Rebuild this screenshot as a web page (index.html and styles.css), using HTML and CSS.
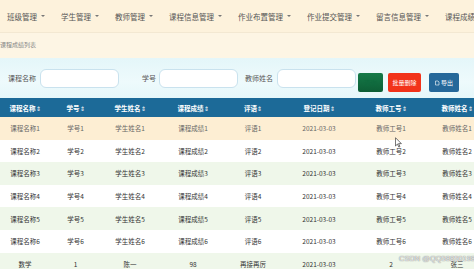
FILE: index.html
```html
<!DOCTYPE html>
<html lang="zh">
<head>
<meta charset="utf-8">
<title>课程成绩列表</title>
<link rel="stylesheet" href="styles.css">
</head>
<body>
<div class="page">
  <nav class="nav">
    <span class="nav-item">班级管理<i class="caret"></i></span>
    <span class="nav-item">学生管理<i class="caret"></i></span>
    <span class="nav-item">教师管理<i class="caret"></i></span>
    <span class="nav-item">课程信息管理<i class="caret"></i></span>
    <span class="nav-item">作业布置管理<i class="caret"></i></span>
    <span class="nav-item">作业提交管理<i class="caret"></i></span>
    <span class="nav-item">留言信息管理<i class="caret"></i></span>
    <span class="nav-item">课程成绩<i class="caret"></i></span>
  </nav>
  <div class="crumb">课程成绩列表</div>
  <div class="search">
    <label class="lbl lbl1">课程名称</label><span class="inp"></span>
    <label class="lbl lbl2">学号</label><span class="inp inp2"></span>
    <label class="lbl lbl3">教师姓名</label><span class="inp inp3"></span>
    <span class="btn btn-green">查询</span>
    <span class="btn btn-red">批量删除</span>
    <span class="btn btn-blue"><svg class="ico" viewBox="0 0 10 10" width="5" height="6"><path d="M1 1h5l2 2v6H1z" fill="none" stroke="#fff" stroke-width="1.2"/></svg>导出</span>
  </div>
  <table class="tbl">
    <colgroup><col class="c1"><col class="c2"><col class="c3"><col class="c4"><col class="c5"><col class="c6"><col class="c7"><col class="c8"></colgroup>
    <thead>
      <tr><th>课程名称<b>⇕</b></th><th>学号<b>⇕</b></th><th>学生姓名<b>⇕</b></th><th>课程成绩<b>⇕</b></th><th>评语<b>⇕</b></th><th>登记日期<b>⇕</b></th><th>教师工号<b>⇕</b></th><th>教师姓名<b>⇕</b></th></tr>
    </thead>
    <tbody>
      <tr class="hover"><td>课程名称1</td><td>学号1</td><td>学生姓名1</td><td>课程成绩1</td><td>评语1</td><td>2021-03-03</td><td>教师工号1</td><td>教师姓名1</td></tr>
      <tr><td>课程名称2</td><td>学号2</td><td>学生姓名2</td><td>课程成绩2</td><td>评语2</td><td>2021-03-03</td><td>教师工号2</td><td>教师姓名2</td></tr>
      <tr class="alt"><td>课程名称3</td><td>学号3</td><td>学生姓名3</td><td>课程成绩3</td><td>评语3</td><td>2021-03-03</td><td>教师工号3</td><td>教师姓名3</td></tr>
      <tr><td>课程名称4</td><td>学号4</td><td>学生姓名4</td><td>课程成绩4</td><td>评语4</td><td>2021-03-03</td><td>教师工号4</td><td>教师姓名4</td></tr>
      <tr class="alt"><td>课程名称5</td><td>学号5</td><td>学生姓名5</td><td>课程成绩5</td><td>评语5</td><td>2021-03-03</td><td>教师工号5</td><td>教师姓名5</td></tr>
      <tr><td>课程名称6</td><td>学号6</td><td>学生姓名6</td><td>课程成绩6</td><td>评语6</td><td>2021-03-03</td><td>教师工号6</td><td>教师姓名6</td></tr>
      <tr class="alt"><td>数学</td><td>1</td><td>陈一</td><td>98</td><td>再接再厉</td><td>2021-03-03</td><td>2</td><td>张三</td></tr>
    </tbody>
  </table>
  <svg class="cursor" viewBox="0 0 8 12" width="7" height="11"><path d="M0.5 0.5v9.5l2.3-2.2 1.6 3.4 1.3-.6-1.6-3.3h3.2z" fill="#fff" stroke="#333" stroke-width="0.8"/></svg>
  <div class="mark">CSDN @QQ58850198</div>
</div>
</body>
</html>
```
FILE: styles.css
```css
html, body {
  margin: 0;
  padding: 0;
}
body {
  width: 474px;
  height: 269px;
  overflow: hidden;
  background: #fdf5e4;
  font-family: "Noto Sans CJK SC", "Noto Sans", sans-serif;
}
.page {
  position: relative;
  width: 474px;
  height: 269px;
  overflow: hidden;
}
.nav {
  height: 32px;
  background: #fdf2dc;
  border-bottom: 1px solid #f3e8d2;
  display: flex;
  align-items: center;
  padding-left: 7px;
  white-space: nowrap;
}
.nav-item {
  font-size: 7.5px;
  color: #555;
  margin-right: 16px;
  display: flex;
  align-items: center;
  flex: none;
}
.caret {
  display: inline-block;
  width: 0;
  height: 0;
  border-left: 2px solid transparent;
  border-right: 2px solid transparent;
  border-top: 2.5px solid #777;
  margin-left: 4px;
}
.crumb {
  height: 25px;
  font-size: 6px;
  color: #888;
  line-height: 24px;
}
.search {
  height: 40px;
  background: linear-gradient(#e4f6f9, #eefafc 60%, #e6f7fa);
  display: flex;
  align-items: flex-start;
  padding-top: 11px;
  box-sizing: border-box;
}
.lbl {
  font-size: 7px;
  color: #555;
  line-height: 19px;
  flex: none;
}
.lbl1 { margin-left: 8px; margin-right: 4px; }
.lbl2 { margin-left: 23px; margin-right: 3px; }
.lbl3 { margin-left: 7px; margin-right: 4px; }
.inp {
  width: 77px;
  height: 17px;
  background: #fff;
  border: 1px solid #c9e2ee;
  border-radius: 6px;
  flex: none;
}
.btn {
  margin-top: 4px;
  height: 19px;
  border-radius: 2px;
  font-size: 6px;
  color: #fff;
  display: flex;
  align-items: center;
  justify-content: center;
  flex: none;
  box-sizing: border-box;
}
.btn-green {
  margin-left: 2px;
  width: 25px;
  background: linear-gradient(#157a48, #0d5e36);
  color: #0f6a3e;
}
.btn-red {
  margin-left: 5px;
  width: 33px;
  background: #f2331a;
}
.btn-blue {
  margin-left: 8px;
  width: 30px;
  background: #25689a;
}
.ico { margin-right: 1px; }
.tbl {
  width: 491px;
  border-collapse: collapse;
  table-layout: fixed;
}
.c1 { width: 50px; }
.c2 { width: 51px; }
.c3 { width: 58px; }
.c4 { width: 68px; }
.c5 { width: 52px; }
.c6 { width: 80px; }
.c7 { width: 64px; }
.c8 { width: 68px; }
.tbl th {
  background: #1c6a98;
  color: #fff;
  font-size: 6.5px;
  font-weight: bold;
  height: 19px;
  padding: 0;
  text-align: center;
  white-space: nowrap;
}
.tbl th b {
  font-weight: normal;
  font-size: 6px;
}
.tbl td {
  height: 22.6px;
  padding: 0;
  font-size: 6.5px;
  color: #333;
  text-align: center;
  white-space: nowrap;
}
.tbl tr { background: #fff; }
.tbl tr.alt { background: #eff7ea; }
.tbl tr.hover { background: #fdeed3; }
.tbl tr.hover td { color: #666; }
.cursor {
  position: absolute;
  left: 395px;
  top: 137px;
}
.mark {
  position: absolute;
  left: 399px;
  top: 254px;
  font-size: 7.5px;
  color: rgba(255, 255, 255, 0.85);
  text-shadow: 0 0 1px #777, 0 0 1px #999;
  font-family: "Liberation Sans", sans-serif;
  white-space: nowrap;
}
```
